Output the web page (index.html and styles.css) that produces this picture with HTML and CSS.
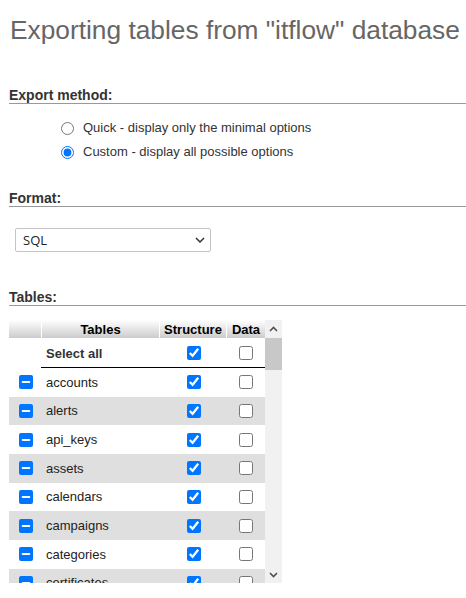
FILE: index.html
```html
<!DOCTYPE html>
<html>
<head>
<meta charset="utf-8">
<link rel="stylesheet" href="styles.css">
</head>
<body>
<h2 class="title">Exporting tables from "itflow" database</h2>

<div class="section-head first">Export method:</div>
<div class="radio-row"><input type="radio" name="m" class="radio"><span>Quick - display only the minimal options</span></div>
<div class="radio-row"><input type="radio" name="m" class="radio" checked><span>Custom - display all possible options</span></div>

<div class="section-head format">Format:</div>
<div class="select">
  <span class="select-text">SQL</span>
  <svg class="chev" width="10" height="6" viewBox="0 0 10 6"><path d="M1 1 L5 5 L9 1" fill="none" stroke="#333" stroke-width="1.5"/></svg>
</div>

<div class="section-head tables">Tables:</div>

<div class="table-wrap">
  <div class="viewport">
    <div class="row head">
      <div class="c c0"></div>
      <div class="c c1">Tables</div>
      <div class="c c2">Structure</div>
      <div class="c c3">Data</div>
    </div>
    <div class="row selall">
      <div class="c c0"></div>
      <div class="c c1 bold">Select all</div>
      <div class="c c2"><input type="checkbox" checked></div>
      <div class="c c3"><input type="checkbox"></div>
    </div>
    <div class="row"><div class="c c0"><input type="checkbox" class="ind"></div><div class="c c1">accounts</div><div class="c c2"><input type="checkbox" checked></div><div class="c c3"><input type="checkbox"></div></div>
    <div class="row odd"><div class="c c0"><input type="checkbox" class="ind"></div><div class="c c1">alerts</div><div class="c c2"><input type="checkbox" checked></div><div class="c c3"><input type="checkbox"></div></div>
    <div class="row"><div class="c c0"><input type="checkbox" class="ind"></div><div class="c c1">api_keys</div><div class="c c2"><input type="checkbox" checked></div><div class="c c3"><input type="checkbox"></div></div>
    <div class="row odd"><div class="c c0"><input type="checkbox" class="ind"></div><div class="c c1">assets</div><div class="c c2"><input type="checkbox" checked></div><div class="c c3"><input type="checkbox"></div></div>
    <div class="row"><div class="c c0"><input type="checkbox" class="ind"></div><div class="c c1">calendars</div><div class="c c2"><input type="checkbox" checked></div><div class="c c3"><input type="checkbox"></div></div>
    <div class="row odd"><div class="c c0"><input type="checkbox" class="ind"></div><div class="c c1">campaigns</div><div class="c c2"><input type="checkbox" checked></div><div class="c c3"><input type="checkbox"></div></div>
    <div class="row"><div class="c c0"><input type="checkbox" class="ind"></div><div class="c c1">categories</div><div class="c c2"><input type="checkbox" checked></div><div class="c c3"><input type="checkbox"></div></div>
    <div class="row odd"><div class="c c0"><input type="checkbox" class="ind"></div><div class="c c1">certificates</div><div class="c c2"><input type="checkbox" checked></div><div class="c c3"><input type="checkbox"></div></div>
  </div>
  <div class="scrollbar">
    <div class="sb-btn"><svg width="9" height="6" viewBox="0 0 9 6"><path d="M1 5 L4.5 1.5 L8 5" fill="none" stroke="#505050" stroke-width="1.6"/></svg></div>
    <div class="sb-thumb"></div>
    <div class="sb-track"></div>
    <div class="sb-btn"><svg width="9" height="6" viewBox="0 0 9 6"><path d="M1 1 L4.5 4.5 L8 1" fill="none" stroke="#505050" stroke-width="1.6"/></svg></div>
  </div>
</div>
<script src="script.js"></script>
</body>
</html>
```

FILE: script.js
```js
document.querySelectorAll('input.ind').forEach(function (el) { el.indeterminate = true; });
```

FILE: styles.css
```css
html, body {
  margin: 0;
  padding: 0;
  background: #fff;
}
body {
  padding: 0 0 0 9px;
  font-family: "Liberation Sans", Arial, sans-serif;
  font-size: 13px;
  color: #333;
}
.title {
  margin: 15px 0 0 1px;
  font-size: 26.3px;
  line-height: 30px;
  font-weight: normal;
  color: #666;
  white-space: nowrap;
}
.section-head {
  font-weight: bold;
  font-size: 14px;
  line-height: 16px;
  color: #333;
  border-bottom: 1px solid #999;
}
.section-head.first { margin-top: 42px; }
.section-head.format { margin-top: 26px; }
.section-head.tables { margin-top: 37px; }

.radio-row {
  display: flex;
  align-items: center;
  height: 24px;
  padding-left: 52px;
  color: #333;
}
.radio-row span { position: relative; top: -1px; }
.section-head.first + .radio-row { margin-top: 12px; }
.radio {
  margin: 0 9px 0 0;
  width: 13px;
  height: 13px;
}

.select {
  margin: 21px 0 0 6px;
  width: 196px;
  height: 24px;
  box-sizing: border-box;
  border: 1px solid #c4c4c4;
  border-radius: 2px;
  display: flex;
  align-items: center;
  justify-content: space-between;
  padding: 0 5px 0 7px;
  font-family: "Open Sans", "Noto Sans", sans-serif;
  font-size: 13px;
  color: #222;
}
.chev { display: block; }

.table-wrap {
  margin-top: 14px;
  display: flex;
  width: 273px;
  height: 263px;
  overflow: hidden;
}
.viewport {
  width: 256px;
  overflow: hidden;
}
.row {
  display: flex;
  height: 28.67px;
  align-items: center;
  background: #fff;
}
.row.odd { background: #dfdfdf; }
.row.head {
  height: 18px;
  background: linear-gradient(#ffffff, #cccccc);
  font-weight: bold;
  color: #000;
  align-items: stretch;
}
.row.head .c {
  justify-content: center;
  border-left: 1px solid #fff;
}
.row.head .c0 { border-left: none; }
.row.selall {
  height: 30px;
  position: relative;
}
.row.selall::after {
  content: "";
  position: absolute;
  left: 32px;
  right: 0;
  bottom: 0;
  height: 1px;
  background: #000;
}
.c {
  display: flex;
  align-items: center;
  height: 100%;
  box-sizing: border-box;
}
.c0 { width: 32px; justify-content: center; }
.c1 { width: 118px; padding-left: 5px; color: #222; }
.c2 { width: 67px; justify-content: center; }
.c3 { width: 39px; justify-content: center; }
.row.head .c1 { padding-left: 0; color: #000; }
.bold { font-weight: bold; color: #333; }
.c input {
  width: 14px;
  height: 14px;
  margin: 0;
}
.c0 input { margin-left: 1px; }
.c2 input { margin-left: 2px; }
.c3 input { margin-left: 1px; }

.scrollbar {
  width: 17px;
  background: #f1f1f1;
  display: flex;
  flex-direction: column;
}
.sb-btn {
  height: 17px;
  display: flex;
  align-items: center;
  justify-content: center;
  flex: none;
}
.sb-thumb {
  height: 32px;
  margin-top: 1px;
  background: #c8c8c8;
  flex: none;
}
.sb-track { flex: 1; }
```
